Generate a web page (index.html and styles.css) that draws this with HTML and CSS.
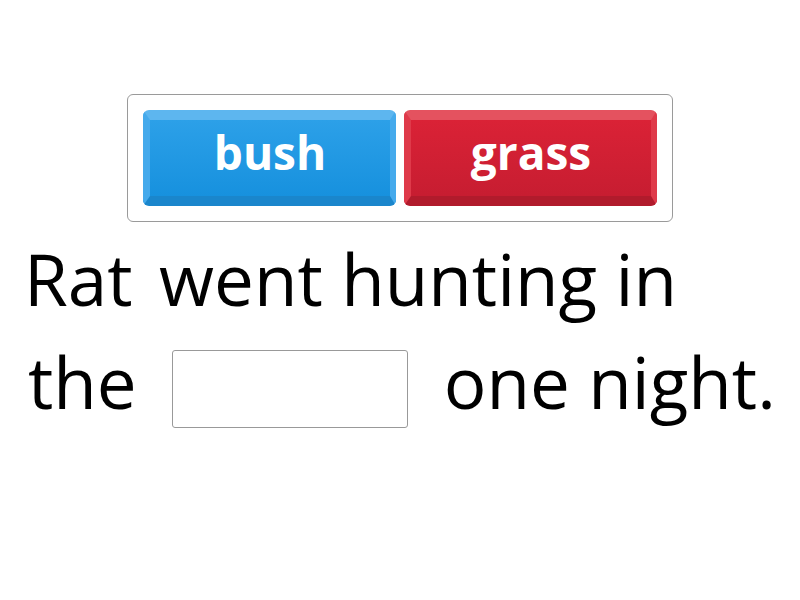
FILE: index.html
```html
<!DOCTYPE html>
<html lang="en">
<head>
  <meta charset="UTF-8">
  <meta name="viewport" content="width=device-width, initial-scale=1.0">
  <title>Missing Word</title>
  <link rel="stylesheet" href="styles.css">
</head>
<body>
  <div class="options">
    <button class="option blue">bush</button>
    <button class="option red">grass</button>
  </div>

  <p class="sentence">
    <span class="word first">Rat</span> went hunting in<br>
    <span class="word second">the</span><span class="blank"></span>one night.
  </p>
</body>
</html>
```

FILE: styles.css
```css
body {
  margin: 0;
  font-family: "Open Sans", Arial, sans-serif;
  background: #fff;
  color: #000;
}
.options {
  width: 514px;
  margin: 94px auto 0;
  padding: 14.5px 15px 15.5px;
  border: 1.5px solid #9a9a9a;
  border-radius: 6px;
  display: flex;
  gap: 8px;
}
.option {
  flex: 1;
  height: 96px;
  border-style: solid;
  border-width: 10px 6px 10px 7px;
  border-radius: 6px;
  font-family: "Open Sans", Arial, sans-serif;
  font-size: 46px;
  font-weight: bold;
  color: #fff;
  padding: 0 0 12px;
  cursor: pointer;
}
.blue {
  border-color: #5db6ef #45aaec #1a86cc #45aaec;
  background: linear-gradient(#2ca0e8, #1791de);
}
.red {
  border-color: #e4525f #df3a4a #b11b2c #df3a4a;
  background: linear-gradient(#da2236, #c71d31);
}
.sentence {
  margin: 5px 0 0;
  padding: 0 10px 0 24px;
  font-size: 71px;
  line-height: 103px;
  white-space: nowrap;
}
.first {
  margin-right: 8px;
}
.second {
  margin-left: 4px;
}
.blank {
  display: inline-block;
  width: 234px;
  height: 76px;
  margin: 0 36px 0 35px;
  border: 1px solid #999;
  border-radius: 3px;
  vertical-align: -19px;
}
```
